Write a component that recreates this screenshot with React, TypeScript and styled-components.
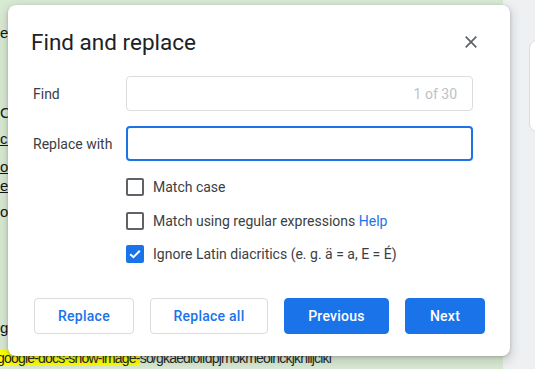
import styled, { createGlobalStyle } from 'styled-components'

const GlobalStyle = createGlobalStyle`
  html, body {
    margin: 0;
    padding: 0;
    overflow: hidden;
  }
  body {
    font-family: Roboto, 'Liberation Sans', Arial, sans-serif;
  }
`;

const Page = styled.div`
  position: relative;
  display: flex;
  width: 535px;
  height: 369px;
  overflow: hidden;
  background: #eef0f2;
`;

const Canvas = styled.div`
  display: flex;
  flex-direction: column;
  flex-shrink: 0;
  width: 503px;
  height: 100%;
  background: #d9ead3;
  font-family: 'Liberation Sans', Arial, sans-serif;
  font-size: 15px;
  color: #111;
  overflow: hidden;
`;

const DocLine = styled.div<{ $top: number; $underline?: boolean }>`
  margin-top: ${(p) => p.$top}px;
  line-height: 18px;
  white-space: nowrap;
  text-decoration: ${(p) => (p.$underline ? 'underline' : 'none')};
`;

const BottomLine = styled.div`
  margin-top: auto;
  margin-left: -3px;
  height: 21px;
  line-height: 21px;
  font-size: 14px;
  letter-spacing: -0.8px;
  white-space: nowrap;
  color: #222;
`;

const Highlight = styled.span`
  background: #ffff00;
`;

const Sidebar = styled.div`
  flex: 1;
  min-width: 0;
  overflow: hidden;
  padding-top: 40px;
  padding-left: 26px;
`;

const SideCard = styled.div`
  width: 40px;
  height: 90px;
  background: #fff;
  border: 1px solid #dadce0;
  border-radius: 8px;
`;

const Dialog = styled.div`
  position: absolute;
  left: 8px;
  top: 5px;
  width: 502px;
  height: 351px;
  box-sizing: border-box;
  padding: 23px 25px 0 26px;
  background: #fff;
  border-radius: 8px;
  box-shadow: 0 4px 8px 3px rgba(60, 64, 67, 0.15), 0 1px 3px rgba(60, 64, 67, 0.3);
  display: flex;
  flex-direction: column;
`;

const Header = styled.div`
  display: flex;
  align-items: center;
  justify-content: space-between;
  height: 28px;
`;

const Title = styled.h2`
  margin: 0 0 0 -3px;
  font-family: Roboto, 'Open Sans', sans-serif;
  font-weight: 400;
  font-size: 22.5px;
  line-height: 28px;
  color: #202124;
`;

const CloseButton = styled.button`
  display: flex;
  align-items: center;
  justify-content: center;
  width: 24px;
  height: 24px;
  margin-right: 2px;
  padding: 0;
  border: none;
  background: none;
  cursor: pointer;
`;

const Form = styled.div`
  display: grid;
  grid-template-columns: 92px 347px;
  row-gap: 15px;
  margin-top: 20px;
  align-items: center;
`;

const Label = styled.label`
  margin-left: -1px;
  font-size: 14px;
  color: #3c4043;
`;

const Field = styled.div<{ $focused?: boolean }>`
  display: flex;
  align-items: center;
  justify-content: flex-end;
  box-sizing: border-box;
  height: 35px;
  padding: 0 15px;
  border: ${(p) => (p.$focused ? '2px solid #1a73e8' : '1px solid #dadce0')};
  border-radius: 4px;
  font-size: 14px;
  color: #bdc1c6;
`;

const Options = styled.div`
  display: flex;
  flex-direction: column;
  gap: 15.5px;
  margin-top: 17px;
  padding-left: 92px;
`;

const Option = styled.div`
  display: flex;
  align-items: center;
  gap: 9px;
  height: 18px;
  font-size: 14px;
  color: #3c4043;
`;

const Box = styled.span<{ $checked?: boolean }>`
  display: flex;
  align-items: center;
  justify-content: center;
  box-sizing: border-box;
  width: 18px;
  height: 18px;
  border-radius: 2px;
  border: 2px solid ${(p) => (p.$checked ? '#1a73e8' : '#5f6368')};
  background: ${(p) => (p.$checked ? '#1a73e8' : '#fff')};
`;

const Link = styled.span`
  color: #1a73e8;
`;

const Actions = styled.div`
  display: flex;
  gap: 16px;
  margin-top: 35px;
`;

const Button = styled.button<{ $primary?: boolean; $width: number }>`
  box-sizing: border-box;
  width: ${(p) => p.$width}px;
  height: 36px;
  padding: 0;
  border-radius: 4px;
  border: 1px solid ${(p) => (p.$primary ? '#1a73e8' : '#dadce0')};
  background: ${(p) => (p.$primary ? '#1a73e8' : '#fff')};
  color: ${(p) => (p.$primary ? '#fff' : '#1a73e8')};
  font-family: Roboto, sans-serif;
  font-weight: 500;
  font-size: 14px;
  letter-spacing: 0.25px;
  cursor: pointer;
`;

function Check(props: { checked?: boolean }) {
  return (
    <Box $checked={props.checked}>
      {props.checked && (
        <svg width="14" height="14" viewBox="0 0 14 14">
          <path d="M2.2 7.2 L5.4 10.2 L11.8 3.8" fill="none" stroke="#fff" strokeWidth="2" />
        </svg>
      )}
    </Box>
  )
}

export default function App() {
  return (
    <>
      <GlobalStyle />
      <Page>
        <Canvas>
          <DocLine $top={24}>e I</DocLine>
          <DocLine $top={62}>C</DocLine>
          <DocLine $top={8} $underline>c2</DocLine>
          <DocLine $top={10} $underline>or</DocLine>
          <DocLine $top={1} $underline>e</DocLine>
          <DocLine $top={8}>o</DocLine>
          <DocLine $top={98}>ge</DocLine>
          <BottomLine>
            <Highlight>google-docs-show-image-</Highlight>so/gkaedlolfdpjmokmeoinckjkhlljclkl
          </BottomLine>
        </Canvas>
        <Sidebar>
          <SideCard />
        </Sidebar>
        <Dialog>
          <Header>
            <Title>Find and replace</Title>
            <CloseButton aria-label="Close">
              <svg width="12" height="12" viewBox="0 0 12 12">
                <path d="M0.7 0.7 L11.3 11.3 M11.3 0.7 L0.7 11.3" stroke="#5f6368" strokeWidth="1.7" />
              </svg>
            </CloseButton>
          </Header>
          <Form>
            <Label>Find</Label>
            <Field>1 of 30</Field>
            <Label>Replace with</Label>
            <Field $focused />
          </Form>
          <Options>
            <Option>
              <Check />
              Match case
            </Option>
            <Option>
              <Check />
              <span>
                Match using regular expressions <Link>Help</Link>
              </span>
            </Option>
            <Option>
              <Check checked />
              Ignore Latin diacritics (e. g. ä = a, E = É)
            </Option>
          </Options>
          <Actions>
            <Button $width={100}>Replace</Button>
            <Button $width={118}>Replace all</Button>
            <Button $primary $width={105}>Previous</Button>
            <Button $primary $width={80}>Next</Button>
          </Actions>
        </Dialog>
      </Page>
    </>
  )
}
